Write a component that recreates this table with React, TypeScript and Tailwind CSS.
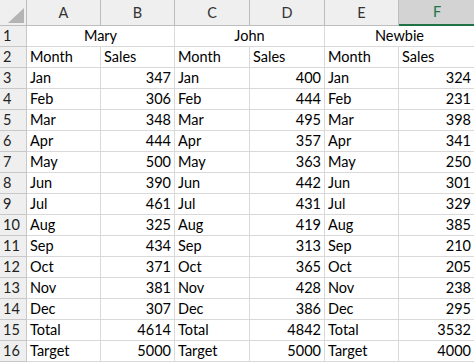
const cols = ["A", "B", "C", "D", "E", "F"];

const data: [string, number, number, number][] = [
  ["Jan", 347, 400, 324],
  ["Feb", 306, 444, 231],
  ["Mar", 348, 495, 398],
  ["Apr", 444, 357, 341],
  ["May", 500, 363, 250],
  ["Jun", 390, 442, 301],
  ["Jul", 461, 431, 329],
  ["Aug", 325, 419, 385],
  ["Sep", 434, 313, 210],
  ["Oct", 371, 365, 205],
  ["Nov", 381, 428, 238],
  ["Dec", 307, 386, 295],
];

const rows: [string, number, number, number][] = [
  ...data,
  ["Total", 4614, 4842, 3532],
  ["Target", 5000, 5000, 4000],
];

const cell = "h-[21px] border-r border-b border-[#d9d9d9] bg-white flex items-center overflow-hidden whitespace-nowrap";
const rowHead = "h-[21px] border-r border-b border-[#c8c8c8] bg-[#efefef] flex items-center pl-[3px] text-[#222]";

export default function App() {
  return (
    <div
      className="w-[474px] h-[363px] overflow-hidden bg-white text-[14.5px] text-black"
      style={{ fontFamily: "Lato, 'Open Sans', sans-serif" }}
    >
      <div className="grid grid-cols-[27px_74px_74px_75px_75px_74px_76px]">
        {/* column header row */}
        <div className="h-[26px] bg-[#efefef] border-r border-b border-[#bdbdbd] relative">
          <svg width="16" height="15" viewBox="0 0 16 15" className="absolute left-[8px] top-[8px]">
            <polygon points="16,0 16,15 0,15" fill="#b4b4b4" />
          </svg>
        </div>
        {cols.map((c) => (
          <div
            key={c}
            className={
              c === "F"
                ? "h-[26px] bg-[#d3d3d3] border-b-2 border-[#217346] flex items-center justify-center text-[#217346]"
                : "h-[26px] bg-[#efefef] border-r border-b border-[#bdbdbd] flex items-center justify-center text-[#333]"
            }
          >
            {c}
          </div>
        ))}

        {/* row 1 */}
        <div className={rowHead}>1</div>
        {["Mary", "John", "Newbie"].map((n) => (
          <div key={n} className={`${cell} col-span-2 justify-center`}>
            {n}
          </div>
        ))}

        {/* row 2 */}
        <div className={rowHead}>2</div>
        {[0, 1, 2].map((i) => (
          <div key={i} className="contents">
            <div className={`${cell} pl-[3px]`}>Month</div>
            <div className={`${cell} pl-[3px]`}>Sales</div>
          </div>
        ))}

        {rows.map((r, idx) => (
          <div key={r[0]} className="contents">
            <div className={rowHead}>{idx + 3}</div>
            {[r[1], r[2], r[3]].map((v, i) => (
              <div key={i} className="contents">
                <div className={`${cell} pl-[3px]`}>{r[0]}</div>
                <div className={`${cell} justify-end pr-[3px]`}>{v}</div>
              </div>
            ))}
          </div>
        ))}
      </div>
    </div>
  );
}
